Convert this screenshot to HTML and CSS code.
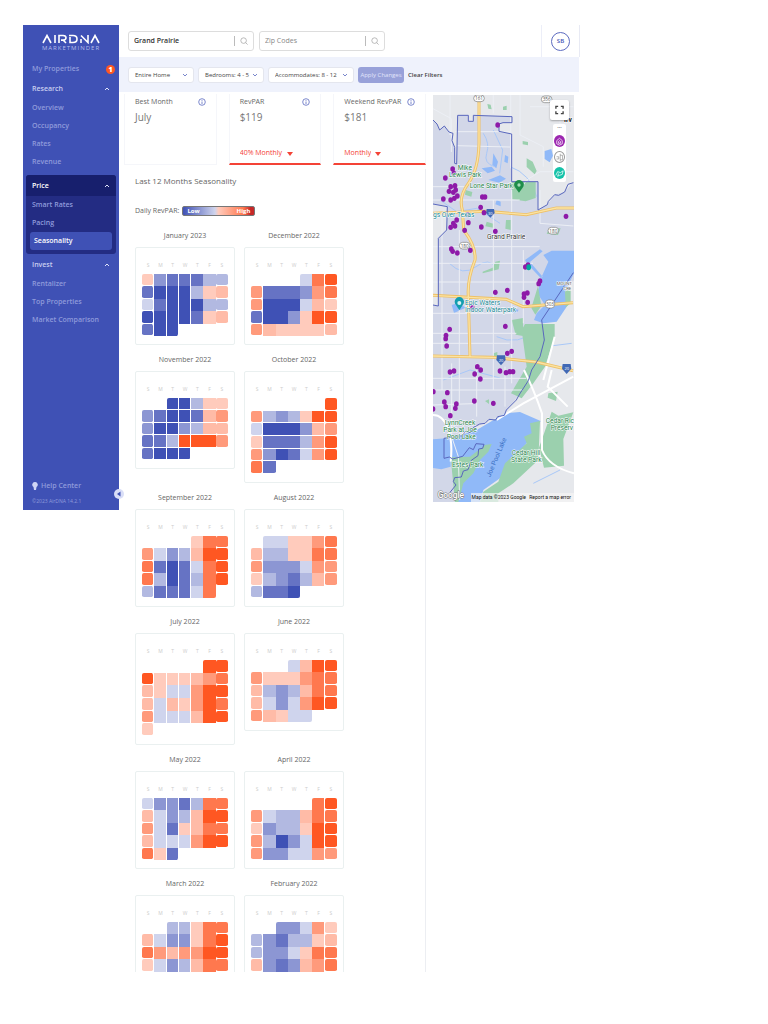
FILE: index.html
```html
<!DOCTYPE html>
<html lang="en">
<head>
	<meta charset="UTF-8">
	<title>AirDNA MarketMinder</title>
	<link rel="stylesheet" href="styles.css">
</head>
<body>
	<div class="app">
		<aside class="sidebar">
			<a class="logo" href="#" aria-label="AirDNA MarketMinder">
				<svg viewBox="0 0 58 10" fill="none" stroke="#fff" stroke-width="1.6">
					<path d="M1 9 5 1.500 9 9M13 1v8M17 9V1.500h4q3 0 3 2.300t-3 2.300h-2M21 6l3 3M28 3v5.500h3q4 0 4-3.500t-4-3.500h-4M39 9V5M39 1.500l7 7V1M49 9l4-7.500L57 9"/>
				</svg>
				<span>MARKETMINDER</span>
			</a>
			<nav>
				<a class="item props" href="#">My Properties <b class="count">1</b></a>
				<button class="group">Research <svg class="up" viewBox="0 0 6 4"><path d="M1 3l2-2 2 2"/></svg></button>
				<a class="item" href="#">Overview</a>
				<a class="item" href="#">Occupancy</a>
				<a class="item" href="#">Rates</a>
				<a class="item" href="#">Revenue</a>
				<div class="open">
					<button class="group">Price <svg class="up" viewBox="0 0 6 4"><path d="M1 3l2-2 2 2"/></svg></button>
					<a class="item" href="#">Smart Rates</a>
					<a class="item" href="#">Pacing</a>
					<a class="item active" href="#">Seasonality</a>
				</div>
				<button class="group">Invest <svg class="up" viewBox="0 0 6 4"><path d="M1 3l2-2 2 2"/></svg></button>
				<a class="item" href="#">Rentalizer</a>
				<a class="item" href="#">Top Properties</a>
				<a class="item" href="#">Market Comparison</a>
			</nav>
			<div class="foot">
				<a class="help" href="#"><svg viewBox="0 0 6 8"><path d="M3 0a2.700 2.700 0 0 1 1.500 5L4 8H2L1.500 5A2.700 2.700 0 0 1 3 0z"/></svg>Help Center</a>
				<small>©2023 AirDNA 14.2.1</small>
			</div>
			<button class="collapse" aria-label="Collapse menu"><svg viewBox="0 0 10 10"><path d="M6.500 2.500v5L3 5z"/></svg></button>
		</aside>

		<div class="main">
			<header class="topbar">
				<div class="search">
					<input class="city" type="text" value="Grand Prairie" aria-label="Market">
					<button aria-label="Search market"><svg viewBox="0 0 10 10"><circle cx="4.500" cy="4.500" r="3.500"/><path d="M7 7l2.500 2.500"/></svg></button>
				</div>
				<div class="search">
					<input type="text" placeholder="Zip Codes" aria-label="Zip codes">
					<button aria-label="Search zip codes"><svg viewBox="0 0 10 10"><circle cx="4.500" cy="4.500" r="3.500"/><path d="M7 7l2.500 2.500"/></svg></button>
				</div>
				<div class="account"><button class="avatar">SB</button></div>
			</header>

			<form class="filters">
				<span class="pick">
					<select aria-label="Room type"><option>Entire Home</option></select>
					<svg viewBox="0 0 6 4"><path d="M1 1l2 2 2-2"/></svg>
				</span>
				<span class="pick">
					<select aria-label="Bedrooms"><option>Bedrooms: 4 - 5</option></select>
					<svg viewBox="0 0 6 4"><path d="M1 1l2 2 2-2"/></svg>
				</span>
				<span class="pick wide">
					<select aria-label="Accommodates"><option>Accommodates: 8 - 12</option></select>
					<svg viewBox="0 0 6 4"><path d="M1 1l2 2 2-2"/></svg>
				</span>
				<button class="apply" type="submit">Apply Changes</button>
				<button class="clear" type="reset">Clear Filters</button>
			</form>

			<div class="content">
				<main class="report">
					<section class="stats">
						<div class="stat">
							<h3>Best Month <svg class="info" viewBox="0 0 8 8"><circle cx="4" cy="4" r="3.300"/><path d="M4 3.500V6M4 2v.8"/></svg></h3>
							<p>July</p>
						</div>
						<div class="stat picked">
							<h3>RevPAR <svg class="info" viewBox="0 0 8 8"><circle cx="4" cy="4" r="3.300"/><path d="M4 3.500V6M4 2v.8"/></svg></h3>
							<p>$119</p>
							<span class="trend">
								<select aria-label="RevPAR forecast"><option>40% Monthly</option></select>
								<svg viewBox="0 0 6 4"><path d="M0 0h6L3 4z"/></svg>
							</span>
						</div>
						<div class="stat picked">
							<h3>Weekend RevPAR <svg class="info" viewBox="0 0 8 8"><circle cx="4" cy="4" r="3.300"/><path d="M4 3.500V6M4 2v.8"/></svg></h3>
							<p>$181</p>
							<span class="trend">
								<select aria-label="Weekend RevPAR forecast"><option>Monthly</option></select>
								<svg viewBox="0 0 6 4"><path d="M0 0h6L3 4z"/></svg>
							</span>
						</div>
					</section>
					<section class="season">
						<h2>Last 12 Months Seasonality</h2>
						<div class="legend">Daily RevPAR: <span class="scale"><b>Low</b><b>High</b></span></div>
						<div class="months" id="months"></div>
					</section>
				</main>

				<div class="map">
					<svg class="tiles" viewBox="9 15 423 1221" preserveAspectRatio="xMidYMid slice">
						<path fill="#e6e8ec" d="M0 0h450v1250H0z"/>
						<!-- city area -->
						<path class="area" d="M9 90l12 12 8 18 14-12 14 18 12 4-3 22 8 20v48l6 2 3-146h32v18h15V76l116 4v18h-27l-12 4v22l38 8v143h79v85l28-16 22-30 30-8 26-30 20-8V548L335 690l8 60-13 50-25 40-35 70-45 60-75 35-88 40v55l60-4 60-34-15 40-80 80v54H9V645l16 3V445l25-25 2-70-43-8z"/>
						<!-- lakes -->
						<g class="water">
							<path d="M432 482h-67l-25 13 15 20-20 45-13 50 23 35-25 25-8 20 28 10 40-5 40-60-15-30 27-55zM285 510l45-32 8 6-38 32 38 44-6 4-42-44zM62 1045l78-25 85-50 45-4 62 27-32 47-10 20-50 60-30 45-50 35-10 36H80l-18-136zM9 1048l50-4 3 86-28 8-25-4z"/>
							<path d="M344 183l20-6 5 20-10 20-15-10zM375 220l20-6v30l-15 4zM190 190l14 25-5 20-12-10zM225 195l10 5-2 20-10-5zM155 235l30-5 10 12-22 8zM175 270l35-14 18 10-20 12zM65 645l20-7 22 15-35 16zM240 655l26 4-6 10-22-2zM200 330l12 5v14l-16-6zM105 240l22-7-4 11z"/>
							<path class="stream" d="M160 130q20 30 10 60t24 40M190 120l28 60-9 70M58 520q40 40 80 10t60 4M240 230q60 20 80 90M30 330l50 35 60-10 70 45M200 740q60 30 130-22M345 770l80-10M40 870l80-30 90 24M310 1180l80-40"/>
						</g>
						<!-- parks -->
						<g class="park">
							<path d="M245 276h72v48l-30 10-40-6zM290 205l18 10 12 28-6 10-24-22zM172 42l10 2 3 14-10-2zM219 50l11-3v13h-11zM278 153l16 3v10l-16-3zM107 300l20 6-3 14-19-6zM228 390h14v30l-16-4zM158 545l30-12 8-18 14-3-4 26-48 12zM245 690l34-6v54l-22-4zM285 702h89v38l-29 90-35 50-35 45-32-15 47-80-15-110zM324 588l10 60-18 26-12-20zM405 605l17-15v50l-15 12zM365 965l20 12 45-10-30 80 2 80-60 6-15-60zM355 910l28-5-5 28-25-10z"/>
							<path d="M62 1102l58-2 45-35 20-3-10 23-25 25-20 40-30 30-15 56H75zM330 993l-5 117-75 70-45 30v26h-55l10-31 45-30 20-55 65-60-8-20 23-10-5-30zM190 790l12-4v20l-12-4zM170 395l20 6v12l-24-4zM358 415h34l-8 20-34-4zM165 933l12-5v14z"/>
						</g>
						<!-- roads -->
						<g class="street">
							<path d="M9 56l55 30v100M60 15v120M242 15v220M390 50v200M75 125h165M80 167l160 4M9 290h100M9 330h260M36 380v520M88 420v520M190 15v55M190 330v570M245 300v580M280 480v220M9 470h320M9 520h300M9 576h320M9 670h240M9 730h250M9 760h230M9 865h280M9 900h270M9 945l120-4M330 300v100l100 8M270 300l20-30 40-25h100M340 230v-60l-70-35V15M300 50h130M65 820v220l20 60 4 130M140 820v160M225 830v120"/>
							<path class="big" d="M282 840q30 60 54 130v110q20 50 96 70M374 740l-34 130M200 990l80-50 150-80M365 840l-12 50 60 60M9 975q30 0 45 40t8 100"/>
						</g>
						<g class="way">
							<path d="M147 15v145q-2 80-32 120t-18 80l4 60q38 50 34 90-24 60-20 110l5 180M9 370l160-6 120 10 90-20h53M9 616l220 12 50 22 150-12M9 798l180 4 130 14 110 26"/>
						</g>
						<g class="way core">
							<path d="M147 15v145q-2 80-32 120t-18 80l4 60q38 50 34 90-24 60-20 110l5 180M9 370l160-6 120 10 90-20h53M9 616l220 12 50 22 150-12M9 798l180 4 130 14 110 26"/>
						</g>
						<path class="edge" d="M9 90l12 12 8 18 14-12 14 18 12 4-3 22 8 20v48l6 2 3-146h32v18h15V76l116 4v18h-27l-12 4v22l38 8v143h79v85l28-16 3-10 19-20 12 2 18-10 10-23 16-5M9 342l43 8-2 70-25 25v203l-16-3M430 548L335 690l8 60-13 50-25 40-10 32-26 40-10 18-30 30-6 16-20 4-6 10-20-2-12 12-16 2-18 10-10 16-16-4-8 14-18 0-4 8-14-4-19 3v60l16-4 10 6 30-8 20-26 12 6 8-18 24 2-4 12-12 2-2 20-20 14-10 28-14 4-6 18-20 2-4 12 8 10-18 22"/>
						<!-- road signs -->
						<g class="sign">
							<rect x="131" y="15" width="32" height="20" rx="10"/><text x="147" y="31">161</text>
							<rect x="334" y="18" width="32" height="20" rx="10"/><text x="350" y="34">356</text>
							<rect x="88" y="457" width="32" height="20" rx="10"/><text x="104" y="473">180</text>
							<rect x="354" y="412" width="32" height="20" rx="10"/><text x="370" y="428">180</text>
							<rect x="346" y="630" width="28" height="24" rx="10"/><text x="360" y="648">303</text>
						</g>
						<g class="shield">
							<path d="M170 357h22l2 12-13 14-13-14z"/><text x="181" y="374">30</text>
							<path d="M201 796h24l2 14-14 16-14-16z"/><text x="213" y="815">20</text>
							<path d="M398 822h24l2 14-14 16-14-16z"/><text x="410" y="841">20</text>
						</g>
						<!-- listings -->
						<g class="dot" id="dots"></g>
						<ellipse cx="296" cy="532" rx="7" ry="9" fill="#00a99d"/>
						<path fill="#1e8e4a" d="M267 308l-11-15a14 14 0 1 1 22 0z"/><circle cx="267" cy="285" r="5" fill="#a5dbb8"/>
						<path fill="#129eaf" d="M88 661l-10-16a14 14 0 1 1 20 0z"/><circle cx="88" cy="639" r="6" fill="#d7f2f5"/>
						<g class="place">
							<text x="83" y="241">Mike</text>
							<text x="57" y="262">Lewis Park</text>
							<text x="119" y="294">Lone Star Park</text>
							<text class="teal" x="9" y="380">gs Over Texas</text>
							<text class="teal" x="105" y="644">Epic Waters</text>
							<text class="teal" x="105" y="665">Indoor Waterpark</text>
							<text x="44" y="1006">LynnCreek</text>
							<text x="40" y="1027">Park at Joe</text>
							<text x="50" y="1048">Pool Lake</text>
							<text x="66" y="1130">Estes Park</text>
							<text x="347" y="999">Cedar Ric</text>
							<text x="362" y="1021">Preserv</text>
							<text x="245" y="1095">Cedar Hill</text>
							<text x="243" y="1116">State Park</text>
							<text class="lake" transform="translate(181 1162) rotate(-67)">Joe Pool Lake</text>
							<text class="town" x="171" y="446">Grand Prairie</text>
							<text class="irving" x="402" y="96">Irv</text>
							<text class="tiny" x="380" y="586">MOUNT</text>
							<text class="tiny" x="400" y="600">CRE</text>
							<text class="google" x="23" y="1225">Google</text>
						</g>
					</svg>
					<button class="full" aria-label="Toggle fullscreen"><svg viewBox="0 0 10 10"><path d="M1 3.500V1h2.500M6.500 1H9v2.500M9 6.500V9H6.500M3.500 9H1V6.500"/></svg></button>
					<div class="tools">
						<span>•••</span>
						<button class="purple" aria-label="Listings"><svg viewBox="0 0 12 12"><path d="M3 5l3-2.500L9 5v3.500L6 10 3 8.500zM5 8V6l1-1 1 1v2z"/></svg></button>
						<button class="plain" aria-label="Layers"><svg viewBox="0 0 12 12"><path d="M7 1v10M2 5h3v3H2M7 3h3v6H7"/></svg></button>
						<button class="green" aria-label="Draw area"><svg viewBox="0 0 12 12"><path d="M2 8l2-4 3 1 3-2-1 4-3 1-2 1 1-3"/></svg></button>
					</div>
					<div class="credit"><span>Map data ©2023 Google</span> <a href="#">Report a map error</a></div>
				</div>
			</div>
		</div>
	</div>
	<script src="seasonality.js"></script>
</body>
</html>
```

FILE: styles.css
```css
* {
	box-sizing: border-box;
}
body {
	margin: 25px 188px 0 23px;
	background: #fff;
	color: #666;
	font: 7px/12px "Open Sans", "Noto Sans", sans-serif;
}
button, input, select {
	margin: 0;
	padding: 0;
	border: 0;
	background: none;
	color: inherit;
	font: inherit;
	appearance: none;
}
a {
	color: inherit;
	text-decoration: none;
}
h2, h3, p {
	margin: 0;
	font-weight: normal;
}
svg {
	display: block;
}
.app {
	display: flex;
	align-items: flex-start;
	height: calc(100vh - 77px);
	overflow: hidden;
}

/* sidebar */
.sidebar {
	position: relative;
	display: flex;
	flex-direction: column;
	flex: 0 0 96px;
	height: 485px;
	background: #3f51b5;
	color: #8f9bdb;
}
.logo {
	display: flex;
	flex-direction: column;
	align-items: center;
	padding-top: 9px;
	color: #b4bceb;
	font-size: 6px;
	line-height: 8px;
	letter-spacing: 1px;
}
.logo svg {
	width: 58px;
	height: 10px;
}
nav {
	padding-top: 8px;
}
.item, .group {
	display: flex;
	align-items: center;
	width: 100%;
	height: 18px;
	padding: 0 4px 0 9px;
	font-weight: 600;
}
.group {
	justify-content: space-between;
	height: 21px;
	padding-right: 9px;
	color: #c9cff0;
}
.props {
	justify-content: space-between;
}
.count {
	width: 9px;
	border-radius: 50%;
	background: #ff5722;
	color: #fff;
	line-height: 9px;
	text-align: center;
}
.up {
	width: 6px;
	height: 4px;
	fill: none;
	stroke: #dfe3fa;
}
.open {
	margin: 4px 3px 0;
	padding-bottom: 4px;
	border-radius: 3px;
	background: #232c83;
}
.open .group {
	padding: 0 6px;
	border-radius: 3px 3px 0 0;
	background: #171f6d;
	color: #fff;
}
.open .item {
	padding-left: 6px;
}
.open .active {
	width: auto;
	margin: 0 4px;
	padding-left: 4px;
	border-radius: 3px;
	background: #3f51b5;
	color: #fff;
}
.foot {
	margin-top: auto;
	padding: 0 9px 3px;
}
.help {
	display: flex;
	gap: 3px;
	padding-bottom: 3px;
	font-size: 7px;
	font-weight: 600;
}
.help svg {
	width: 6px;
	height: 8px;
	margin-top: 2px;
	fill: #cfd5f5;
}
.foot small {
	display: block;
	font-size: 5px;
}
.collapse {
	position: absolute;
	right: -5px;
	bottom: 11px;
	width: 10px;
	height: 10px;
	border-radius: 50%;
	background: #d9def7;
}
.collapse path {
	fill: #3f51b5;
}

/* top bar and filters */
.main {
	flex: 1;
	min-width: 0;
}
.topbar {
	display: flex;
	align-items: center;
	gap: 5px;
	height: 32px;
	padding-left: 9px;
	border-right: 1px solid #e8eaf4;
}
.search {
	display: flex;
	align-items: center;
	flex: 0 1 126px;
	height: 20px;
	border: 1px solid #ddd;
	border-radius: 3px;
}
.search input {
	flex: 1;
	min-width: 0;
	padding-left: 5px;
	outline: 0;
}
.search .city {
	color: #333;
	font-weight: 600;
}
.search input::placeholder {
	color: #888;
}
.search button {
	padding: 0 5px;
	border-left: 1px solid #bbb;
}
.search svg {
	width: 8px;
	height: 10px;
	fill: none;
	stroke: #aaa;
}
.account {
	display: flex;
	align-items: center;
	justify-content: center;
	align-self: stretch;
	width: 38px;
	margin-left: auto;
	border-left: 1px solid #eceef8;
}
.avatar {
	width: 19px;
	height: 19px;
	border: 1px solid #5c6bc0;
	border-radius: 50%;
	color: #3f51b5;
	font-size: 6px;
	font-weight: 600;
}
.filters {
	display: flex;
	align-items: center;
	gap: 4px;
	height: 35px;
	margin-right: 1px;
	padding-left: 9px;
	background: #eff2fc;
	font-size: 6px;
}
.pick {
	display: flex;
	align-items: center;
	flex: 0 1 66px;
	height: 16px;
	padding: 0 5px 0 6px;
	border: 1px solid #e4e6ee;
	border-radius: 3px;
	background: #fff;
}
.pick.wide {
	flex-basis: 86px;
}
.pick select {
	flex: 1;
	min-width: 0;
	color: #444;
}
.pick svg {
	width: 6px;
	height: 4px;
	fill: none;
	stroke: #7986cb;
}
.apply {
	height: 16px;
	flex: 0 0 46px;
	border-radius: 3px;
	background: #98a1d9;
	color: #e1e5fb;
	white-space: nowrap;
}
.clear {
	color: #444;
	font-weight: 600;
	white-space: nowrap;
}

/* report */
.content {
	display: flex;
	align-items: flex-start;
	gap: 6px;
	padding-right: 6px;
}
.report {
	flex: 1;
	min-width: 0;
	padding: 2px 1px 0 5px;
}
.stats {
	display: grid;
	grid-template-columns: repeat(3, 1fr);
	gap: 12px;
}
.stat {
	height: 71px;
	padding: 2px 10px 0 10px;
	border: 1px solid #f5f6fa;
	border-top: 0;
}
.stat.picked {
	border-bottom: 2px solid #f44336;
}
.stat h3 {
	display: flex;
	align-items: center;
	justify-content: space-between;
	font-size: 7px;
	white-space: nowrap;
}
.info {
	width: 8px;
	height: 8px;
	fill: none;
	stroke: #5c6bc0;
	stroke-width: .8;
}
.stat p {
	padding-top: 2px;
	color: #777;
	font-size: 10px;
	line-height: 14px;
}
.trend {
	display: flex;
	align-items: center;
	gap: 4px;
	padding-top: 23px;
	color: #f44336;
}
.trend svg {
	width: 6px;
	height: 4px;
	margin-top: 2px;
	fill: #f44336;
}
.season {
	margin-top: 4px;
	padding: 5px 0 0 11px;
	border-right: 1px solid #eceef2;
}
.season h2 {
	font-size: 8px;
	line-height: 14px;
}
.legend {
	display: flex;
	align-items: center;
	gap: 3px;
	padding-top: 17px;
}
.scale {
	display: flex;
	justify-content: space-between;
	width: 73px;
	padding: 0 4px;
	border: 1px solid #777;
	border-radius: 2px;
	background: linear-gradient(90deg, #3f51b5, #cfd4ed 45%, #ffcbbc 50%, #ff784e 85%, #c62828 95%);
	color: #fff;
	font-size: 6px;
	line-height: 8px;
}
.months {
	display: grid;
	grid-template-columns: 100px 100px;
	align-items: start;
	gap: 8px 9px;
	padding-top: 12px;
}
.days {
	padding: 12px 6px 8px;
	border: 1px solid #eaf0f0;
	border-radius: 2px;
}
.month h3 {
	padding-bottom: 4px;
	font-size: 7px;
	line-height: 14px;
	text-align: center;
}
.month table {
	width: 100%;
	border-collapse: separate;
	border-spacing: 0;
	table-layout: fixed;
}
.month.weeks-5 table {
	height: 76px;
}
.month.weeks-6 table {
	height: 90px;
}
.month th {
	height: 14px;
	padding: 0;
	color: #ccc;
	font-size: 5px;
	font-weight: normal;
	line-height: 10px;
	vertical-align: top;
}
.month td {
	padding: 0;
	background-clip: padding-box;
}
.cols td:nth-child(-n+4), .month td:first-child, .right td:nth-child(6) {
	border-right: 1px solid #fff;
}
.rows td, .month td:first-child, .month td:last-child {
	border-bottom: 1px solid #fff;
}
.month td:first-child, .month td:last-child {
	border-radius: 2px;
}
.month .first {
	border-top-left-radius: 2px;
}
.month .last {
	border-bottom-right-radius: 2px;
}
.a { background-color: #3f51b5; }
.b { background-color: #6673c4; }
.c { background-color: #8c96d3; }
.d { background-color: #b2b9e1; }
.e { background-color: #cfd4ed; }
.f { background-color: #ffcbbc; }
.g { background-color: #ffbba7; }
.h { background-color: #ff9a7b; }
.i { background-color: #ff784e; }
.j { background-color: #ff5722; }

/* map */
.map {
	position: relative;
	flex: 0 0 141px;
	margin-top: 3px;
	overflow: hidden;
}
.tiles {
	width: 100%;
	height: 407px;
}
.area { fill: #d2d7e8; }
.park { fill: #9bd0ae; }
.water { fill: #90b9f8; }
.stream {
	fill: none;
	stroke: #a9c8f8;
	stroke-width: 3;
}
.street {
	fill: none;
	stroke: #eceff5;
	stroke-width: 3;
}
.street .big {
	stroke: #fff;
	stroke-width: 6;
}
.way {
	fill: none;
	stroke: #eec067;
	stroke-width: 9;
}
.way.core {
	stroke: #fbe3a2;
	stroke-width: 4;
}
.edge {
	fill: none;
	stroke: #5967bd;
	stroke-width: 3;
}
.sign rect {
	fill: #fff;
	stroke: #777;
	stroke-width: 2;
}
.sign text, .shield text {
	fill: #555;
	font-size: 14px;
	text-anchor: middle;
}
.shield path {
	fill: #4169b5;
}
.shield text {
	fill: #fff;
	font-size: 12px;
}
.dot {
	fill: #8e1aa8;
}
.place {
	fill: #26834b;
	stroke: #fff;
	stroke-width: 3;
	paint-order: stroke;
	font: 20px Roboto, sans-serif;
}
.place .teal { fill: #148693; }
.place .lake { fill: #3b6fc4; stroke: none; }
.place .town { fill: #333; }
.place .irving {
	fill: #222;
	font-weight: bold;
}
.place .tiny { fill: #555; font-size: 13px; }
.place .google {
	fill: #fff;
	stroke: #777;
	font-size: 25px;
	font-weight: 500;
}
.full {
	position: absolute;
	top: 5px;
	right: 5px;
	width: 19px;
	height: 20px;
	padding: 5px;
	border-radius: 2px;
	background: #fff;
	box-shadow: 0 1px 2px rgba(0, 0, 0, .3);
}
.full svg {
	width: 9px;
	height: 10px;
	fill: none;
	stroke: #444;
	stroke-width: 1.5;
}
.tools {
	position: absolute;
	top: 29px;
	right: 8px;
	display: flex;
	flex-direction: column;
	align-items: center;
	gap: 4px;
	width: 13px;
	height: 58px;
	border-radius: 2px;
	background: #fff;
	color: #888;
	font-size: 4px;
	line-height: 7px;
}
.tools button {
	width: 11px;
	height: 12px;
	border-radius: 50%;
}
.tools svg {
	fill: none;
	stroke: #fff;
	stroke-width: .8;
}
.tools .purple { background: #9c27b0; }
.tools .green { background: #14c2a9; }
.tools .plain {
	border: 1px solid #999;
}
.tools .plain svg { stroke: #888; }
.credit {
	position: absolute;
	right: 0;
	bottom: 0;
	padding: 0 3px 0 1px;
	background: rgba(245, 245, 245, .7);
	color: #111;
	font: 5px/9px Roboto, sans-serif;
	white-space: nowrap;
}
.credit a {
	padding-left: 2px;
}
```

FILE: seasonality.js
```js
// one letter per day, a = lowest RevPAR, j = highest, dot = not in this month
var months = [
	['January 2023', 'cols', 'fcbbbdd baaadfg ebaaadd aaaabfg baa....'],
	['December 2022', '', '....eij hbbbchi haaaegf baacfjj hgffffg'],
	['November 2022', 'cols rows', '..aadff cbaabgh caacdgg bbdjjjh baaa...'],
	['October 2022', 'rows', '......j hdcdfjj eaaacgh fbbbdhj hcabehj ib.....'],
	['September 2022', 'cols', '....fii hecdgjj ibabeij idabdij dbbbei.'],
	['August 2022', '', '.eeffhi gddffii hcccehh fdcbdgh dbba...'],
	['July 2022', 'cols', '.....jj jfffghi gfeehjj gegfhji heeegjj f......'],
	['June 2022', '', '...egjj hfffhii gdcdgii gecehjj hgfee..'],
	['May 2022', 'cols', 'eccbdii gecdgjj hebfgii geeehjj ifb....'],
	['April 2022', '', '.....ij heddgii fcddfjj hdacejj hcceehh'],
	['March 2022', 'cols', '..ddfii geccfij ihghhjj fecdgii gedde..'],
	['February 2022', '', '..ccehf dcbddfg dccefii gcbcghi dc.....']
]

document.getElementById('months').innerHTML = months.map(function(month, n) {
	var weeks = month[2].split(' ')
	var first = month[2].search(/[a-j]/)
	var rows = weeks.map(function(week, w) {
		return '<tr>' + week.split('').map(function(day, d) {
			if (day === '.') return '<td></td>'
			var cls = day
			if (w === 0 && d === first) cls += ' first'
			if (w === weeks.length - 1 && (d === 6 || week[d + 1] === '.')) cls += ' last'
			return '<td class="' + cls + '"></td>'
		}).join('') + '</tr>'
	}).join('')

	return '<div class="month weeks-' + weeks.length + ' ' + month[1] + (n % 2 ? ' right' : '') + '">' +
		'<h3>' + month[0] + '</h3>' +
		'<div class="days"><table aria-label="' + month[0] + '">' +
		'<thead><tr>' + 'SMTWTFS'.split('').map(function(day) { return '<th>' + day + '</th>' }).join('') + '</tr></thead>' +
		'<tbody>' + rows + '</tbody></table></div></div>'
}).join('')

// listing positions in map units
var dots = [
	[203, 105], [68, 237], [72, 250], [46, 264], [62, 290], [75, 287], [57, 304], [70, 307], [77, 300],
	[40, 327], [62, 330], [73, 325], [82, 318], [157, 321], [165, 321], [152, 352], [162, 368], [113, 374],
	[408, 379], [154, 411], [115, 398], [80, 390], [70, 400], [75, 408], [62, 412], [104, 421], [196, 424],
	[64, 477], [68, 484], [82, 489], [121, 481], [286, 531], [294, 525], [330, 573], [326, 581],
	[196, 607], [232, 601], [282, 612], [292, 609], [282, 622], [293, 637], [127, 653], [226, 709],
	[59, 718], [48, 736], [47, 746], [50, 768], [245, 784], [232, 790], [142, 830], [152, 840],
	[60, 846], [72, 843], [134, 852], [151, 867], [210, 843], [228, 848], [239, 845], [249, 845],
	[10, 905], [52, 908], [43, 936], [47, 950], [79, 942], [76, 955], [133, 933], [190, 940], [61, 977], [9, 957]
]

document.getElementById('dots').innerHTML = dots.map(function(dot) {
	return '<ellipse cx="' + dot[0] + '" cy="' + dot[1] + '" rx="7" ry="8"/>'
}).join('')
```
